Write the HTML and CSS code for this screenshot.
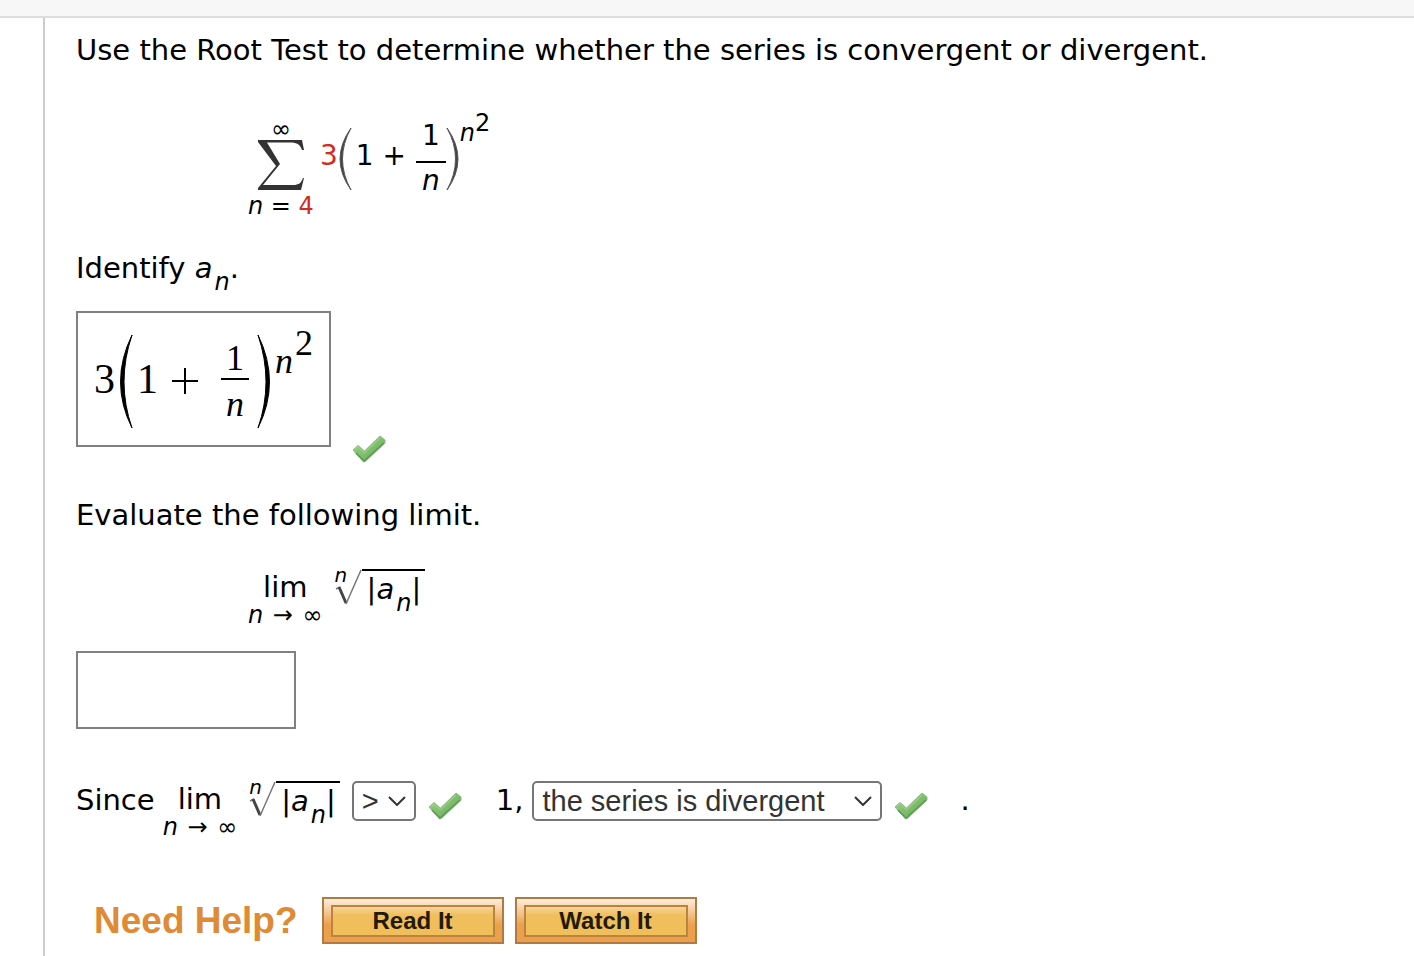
FILE: index.html
```
<!DOCTYPE html>
<html lang="en">
<head>
    <meta charset="UTF-8">
    <meta name="viewport" content="width=device-width, initial-scale=1.0">
    <title>Root Test</title>
    <link rel="stylesheet" href="styles.css">
</head>
<body>
    <!-- Shared shapes -->
    <svg class="defs" width="0" height="0" aria-hidden="true">
        <defs>
            <linearGradient id="green" x1="0" y1="0" x2="1" y2="1">
                <stop offset="0.3" stop-color="#8cc878"/>
                <stop offset="1" stop-color="#5fa653"/>
            </linearGradient>
            <symbol id="check" viewBox="0 0 34 28">
                <path d="M1 15 L6 10.500 L12.500 16 L28 1 L33 5 L33 8 L14 26 L11.500 27 Z" fill="url(#green)" stroke="#8dbd82" stroke-width="1" stroke-linejoin="round"/>
                <path d="M3 14.500 L6 12 L12.500 18 L28 3" fill="none" stroke="#a5d694" stroke-width="1"/>
                <path d="M4 18 L12 26 L32 8" fill="none" stroke="#5d9a54" stroke-width="1.500"/>
            </symbol>
            <symbol id="radical" viewBox="0 0 27 36">
                <path d="M1 20 L5 18" fill="none" stroke="#777" stroke-width="1.500"/>
                <path d="M4 18 L11 34" fill="none" stroke="#444" stroke-width="3"/>
                <path d="M11 35 L26 1" fill="none" stroke="#777" stroke-width="1.500"/>
            </symbol>
            <symbol id="chevron" viewBox="0 0 18 10">
                <path d="M1 1 L9 9 L17 1" fill="none" stroke="#333" stroke-width="2"/>
            </symbol>
        </defs>
    </svg>

    <div class="top-bar"></div>

    <main class="question">
        <p class="line">Use the Root Test to determine whether the series is convergent or divergent.</p>

        <div class="formula series">
            <div class="sum">
                <span class="sum-top">∞</span>
                <svg class="sigma" width="46" height="50" viewBox="0 0 46 50">
                    <path d="M0 0 H44 L46 10 H44 C42 5 40 3 34 2.500 H9 L22 24 L5 45 H35 C41 45 43 43 45 38 H46 L43 50 H0 V48 L18 26 L0 2 Z" fill="#333"/>
                </svg>
                <span class="sum-bottom"><i>n</i> = <span class="red">4</span></span>
            </div>
            <div class="expression">
                <span class="term red">3</span>
                <svg class="paren" width="14" height="64" viewBox="0 0 14 64">
                    <path d="M13 1 Q-9 32 13 63 Q-4 32 13 1 Z" fill="#444" stroke="#555" stroke-width="1"/>
                </svg>
                <span class="term inside">1 +</span>
                <span class="fraction">
                    <span class="numerator">1</span>
                    <span class="denominator"><i>n</i></span>
                </span>
                <svg class="paren" width="14" height="64" viewBox="0 0 14 64">
                    <path d="M1 1 Q23 32 1 63 Q18 32 1 1 Z" fill="#444" stroke="#555" stroke-width="1"/>
                </svg>
                <span class="exponent"><i>n</i><span class="power">2</span></span>
            </div>
        </div>

        <p class="line identify">Identify <i>a</i><i class="sub">n</i>.</p>

        <div class="answer-row">
            <div class="answer" role="textbox" aria-label="a sub n" tabindex="0">
                <span class="term">3</span>
                <svg class="paren" width="14" height="100" viewBox="0 0 14 100">
                    <path d="M13 6 Q-10 53 13 99 Q-3 53 13 6 Z" fill="#000" stroke="#000" stroke-width="1"/>
                </svg>
                <span class="term">1</span>
                <svg class="plus" width="28" height="28" viewBox="0 0 28 28">
                    <path d="M14 1 V27 M1 14 H27" stroke="#000" stroke-width="2"/>
                </svg>
                <span class="fraction">
                    <span class="numerator">1</span>
                    <span class="denominator"><i>n</i></span>
                </span>
                <svg class="paren" width="14" height="100" viewBox="0 0 14 100">
                    <path d="M1 6 Q24 53 1 99 Q17 53 1 6 Z" fill="#000" stroke="#000" stroke-width="1"/>
                </svg>
                <span class="exponent"><i>n</i><span class="power">2</span></span>
            </div>
            <svg class="check" width="34" height="28" role="img" aria-label="Correct"><use href="#check"/></svg>
        </div>

        <p class="line evaluate">Evaluate the following limit.</p>

        <div class="formula limit-row">
            <div class="limit">
                <span class="limit-name">lim</span>
                <span class="limit-under"><i>n</i> <span class="arrow">→</span> ∞</span>
            </div>
            <div class="root">
                <i class="index">n</i>
                <svg width="27" height="36"><use href="#radical"/></svg>
                <span class="radicand">|<i>a</i><i class="sub">n</i>|</span>
            </div>
        </div>

        <input class="blank" type="text" aria-label="Value of the limit">

        <div class="since">
            <span class="text">Since</span>
            <div class="limit">
                <span class="limit-name">lim</span>
                <span class="limit-under"><i>n</i> <span class="arrow">→</span> ∞</span>
            </div>
            <div class="root">
                <i class="index">n</i>
                <svg width="27" height="36"><use href="#radical"/></svg>
                <span class="radicand">|<i>a</i><i class="sub">n</i>|</span>
            </div>
            <div class="select compare">
                <select aria-label="Comparison">
                    <option>&gt;</option>
                    <option>&lt;</option>
                    <option>=</option>
                </select>
                <svg class="chevron" width="18" height="10"><use href="#chevron"/></svg>
            </div>
            <svg class="check" width="34" height="28" role="img" aria-label="Correct"><use href="#check"/></svg>
            <span class="text one">1,</span>
            <div class="select conclusion">
                <select aria-label="Conclusion">
                    <option>the series is divergent</option>
                    <option>the series is convergent</option>
                    <option>the test is inconclusive</option>
                </select>
                <svg class="chevron" width="18" height="10"><use href="#chevron"/></svg>
            </div>
            <svg class="check" width="34" height="28" role="img" aria-label="Correct"><use href="#check"/></svg>
            <span class="text stop">.</span>
        </div>

        <div class="help">
            <span class="help-title">Need Help?</span>
            <button class="help-btn" type="button"><span>Read It</span></button>
            <button class="help-btn" type="button"><span>Watch It</span></button>
        </div>
    </main>
</body>
</html>
```
FILE: styles.css
```
:root {
    --red: #d42a20;
    --border: #767676;
    --orange: #e08a35;
}

* {
    margin: 0;
    padding: 0;
    box-sizing: border-box;
}

body {
    display: flex;
    flex-direction: column;
    min-height: 100vh;
    font-family: Verdana, "DejaVu Sans", sans-serif;
    font-size: 29px;
    line-height: 32px;
    color: #000;
    background: #fff;
}

svg {
    display: block;
    flex: none;
}

.defs {
    position: absolute;
}

.red {
    color: var(--red);
}

.top-bar {
    height: 18px;
    background: #f7f7f7;
    border-bottom: 2px solid #ddd;
}

.question {
    flex: 1;
    margin-left: 43px;
    padding: 16px 32px 12px 31px;
    border-left: 2px solid #ccc;
}

.sub {
    margin-left: 2px;
    font-size: 24px;
    line-height: 0;
    vertical-align: -12px;
}

/* Series */
.formula {
    display: flex;
    align-items: flex-start;
    margin-left: 172px;
}

.series {
    margin-top: 54px;
}

.sum {
    display: flex;
    flex-direction: column;
    align-items: center;
    font-size: 24px;
    line-height: 32px;
}

.sum-top {
    padding-bottom: 2px;
    line-height: 18px;
}

.sum-bottom {
    white-space: nowrap;
}

.expression {
    display: flex;
    align-items: center;
    margin-left: 6px;
    font-size: 28px;
}

.expression .term {
    padding-bottom: 6px;
}

.expression .inside {
    margin: 0 10px 0 4px;
}

.fraction {
    display: flex;
    flex-direction: column;
    text-align: center;
}

.numerator {
    border-bottom: 2px solid #000;
}

.expression .numerator {
    padding: 0 6px 9px;
}

.expression .denominator {
    padding-top: 2px;
}

.exponent {
    display: flex;
    align-items: flex-end;
    align-self: flex-start;
}

.expression .exponent {
    margin-top: -9px;
    font-size: 24px;
    line-height: 24px;
}

.expression .power {
    padding-bottom: 10px;
}

.identify {
    margin-top: 30px;
}

/* Answer box */
.answer-row {
    display: flex;
    align-items: flex-end;
    gap: 21px;
    margin-top: 27px;
}

.answer {
    display: flex;
    align-items: center;
    margin-bottom: 16px;
    padding: 16px;
    border: 2px solid #808080;
    font-family: "Liberation Serif", serif;
    font-size: 42px;
    line-height: 48px;
}

.answer .paren {
    margin: 0 4px;
}

.answer .plus {
    margin: 4px 22px 0 13px;
}

.answer .fraction {
    margin-right: 4px;
    font-size: 36px;
}

.answer .numerator {
    padding: 8px 5px 0;
    line-height: 40px;
}

.answer .exponent {
    gap: 2px;
    margin-top: -4px;
    font-size: 36px;
    line-height: 36px;
}

.answer .power {
    padding-bottom: 18px;
}

.evaluate {
    margin-top: 36px;
}

/* Limits and roots */
.limit-row {
    gap: 12px;
    margin-top: 38px;
}

.limit {
    display: flex;
    flex-direction: column;
    align-items: center;
    padding-top: 2px;
    white-space: nowrap;
}

.limit-under {
    font-size: 24px;
    line-height: 24px;
}

.arrow {
    padding: 0 2px;
}

.root {
    position: relative;
    display: flex;
    align-items: flex-start;
}

.index {
    position: absolute;
    top: -6px;
    left: 0;
    font-size: 20px;
    line-height: 24px;
}

.radicand {
    padding: 2px 4px 0 5px;
    border-top: 2px solid #000;
}

.blank {
    display: block;
    width: 220px;
    height: 78px;
    margin-top: 24px;
    padding: 0 16px;
    border: 2px solid #808080;
    font-family: "Liberation Serif", serif;
    font-size: 42px;
}

/* Conclusion */
.since {
    display: flex;
    align-items: flex-start;
    margin-top: 52px;
}

.since .text {
    padding-top: 3px;
}

.since .limit {
    margin: 0 12px 0 8px;
}

.since .root {
    margin-right: 12px;
}

.select {
    position: relative;
}

.select select {
    appearance: none;
    display: block;
    width: 100%;
    height: 40px;
    padding: 0 8px;
    border: 2px solid var(--border);
    border-radius: 5px;
    background: #fff;
    color: #333;
    font-family: Arial, "Liberation Sans", sans-serif;
    font-size: 29px;
}

.chevron {
    position: absolute;
    top: 15px;
    right: 10px;
    pointer-events: none;
}

.compare {
    width: 64px;
}

.conclusion {
    width: 350px;
}

.since .check {
    margin: 11px 0 0 12px;
}

.since .one {
    margin: 0 9px 0 34px;
}

.since .stop {
    margin-left: 32px;
}

/* Help */
.help {
    display: flex;
    align-items: center;
    gap: 11px;
    margin-top: 58px;
    padding-left: 18px;
    font-family: Arial, "Liberation Sans", sans-serif;
    font-weight: bold;
}

.help-title {
    margin-right: 13px;
    color: var(--orange);
    font-size: 37px;
}

.help-btn {
    width: 182px;
    height: 47px;
    padding: 6px 7px;
    border: 2px solid #b07b42;
    background: linear-gradient(#fdeedd, #eda04b 60%);
    color: #231a06;
    font: inherit;
    font-size: 24px;
    cursor: pointer;
}

.help-btn span {
    display: block;
    border: 2px solid #b98440;
    background: linear-gradient(#f6d49a, #f1be5c 30%);
    line-height: 28px;
}
```
